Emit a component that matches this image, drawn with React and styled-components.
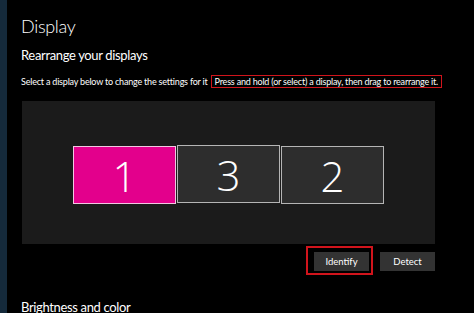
import React from 'react';
import styled, { createGlobalStyle } from 'styled-components';

const GlobalStyle = createGlobalStyle`
  html, body {
    margin: 0;
    padding: 0;
    background: #000;
  }
  body {
    font-family: Lato, "Open Sans", sans-serif;
    color: #fff;
  }
`;

const displays = [
  { id: 1, active: true },
  { id: 3, active: false, raised: true },
  { id: 2, active: false },
];

const App = () => {
  return (
    <>
      <GlobalStyle />
      <Page>
        <Rail />
        <Main>
          <Title>Display</Title>
          <Heading>Rearrange your displays</Heading>
          <Description>
            Select a display below to change the settings for it
            <Callout>Press and hold (or select) a display, then drag to rearrange it.</Callout>
          </Description>
          <Canvas>
            <TileRow>
              {displays.map((d) => (
                <Tile key={d.id} $active={d.active} $raised={d.raised}>
                  {d.id}
                </Tile>
              ))}
            </TileRow>
          </Canvas>
          <ButtonRow>
            <Marked>
              <Button>Identify</Button>
            </Marked>
            <Button $offset="6px">Detect</Button>
          </ButtonRow>
          <Heading $section>Brightness and color</Heading>
        </Main>
      </Page>
    </>
  );
};

export default App;

const Page = styled.div`
  display: flex;
  width: 474px;
  height: 313px;
  overflow: hidden;
  background: #000;
`;

const Rail = styled.div`
  width: 7px;
  flex-shrink: 0;
  background: #152a3b;
`;

const Main = styled.div`
  display: flex;
  flex-direction: column;
  padding-left: 14px;
  width: 414px;

  & > * {
    flex-shrink: 0;
  }
`;

const Title = styled.h1`
  margin: 14px 0 0;
  font-size: 18px;
  font-weight: 300;
  line-height: 24px;
  letter-spacing: -0.3px;
  color: #fff;
`;

const Heading = styled.h2`
  margin: ${({ $section }) => ($section ? '23px 0 0' : '8px 0 0')};
  font-size: 13px;
  font-weight: 400;
  line-height: 18px;
  letter-spacing: -0.35px;
  color: #fff;
`;

const Description = styled.p`
  margin: 10px 0 0;
  font-size: 9px;
  line-height: 15px;
  letter-spacing: -0.2px;
  color: #fff;
  white-space: nowrap;
`;

const Callout = styled.span`
  margin-left: 3px;
  padding: 0 3px;
  border: 1.5px solid #d1141c;
`;

const Canvas = styled.div`
  margin: 12px 0 0 1px;
  width: 413px;
  height: 143px;
  background: #1b1b1b;
  display: flex;
  align-items: center;
  justify-content: center;
`;

const TileRow = styled.div`
  display: flex;
  gap: 1px;
  padding-top: 5px;
`;

const Tile = styled.div`
  width: 103px;
  height: 58px;
  box-sizing: border-box;
  border: 1.5px solid ${({ $active }) => ($active ? '#f2c6e2' : '#b5b5b5')};
  background: ${({ $active }) => ($active ? '#e3008c' : '#2d2d2d')};
  display: flex;
  align-items: center;
  justify-content: center;
  font-family: "Open Sans", sans-serif;
  font-size: 42px;
  font-weight: 300;
  color: #fff;
  transform: translateY(${({ $raised }) => ($raised ? '-1px' : '0')});
`;

const ButtonRow = styled.div`
  margin: 2px 0 0 1px;
  width: 413px;
  display: flex;
  justify-content: flex-end;
  align-items: flex-start;
  gap: 7px;
`;

const Marked = styled.div`
  display: flex;
  padding: 4px 2px 2px 6px;
  border: 2px solid #d1141c;
`;

const Button = styled.button`
  width: 55px;
  height: 19px;
  margin-top: ${({ $offset }) => $offset || '0'};
  border: none;
  padding: 0;
  background: #333;
  color: #fff;
  font-family: Lato, "Open Sans", sans-serif;
  font-size: 9.5px;
`;
